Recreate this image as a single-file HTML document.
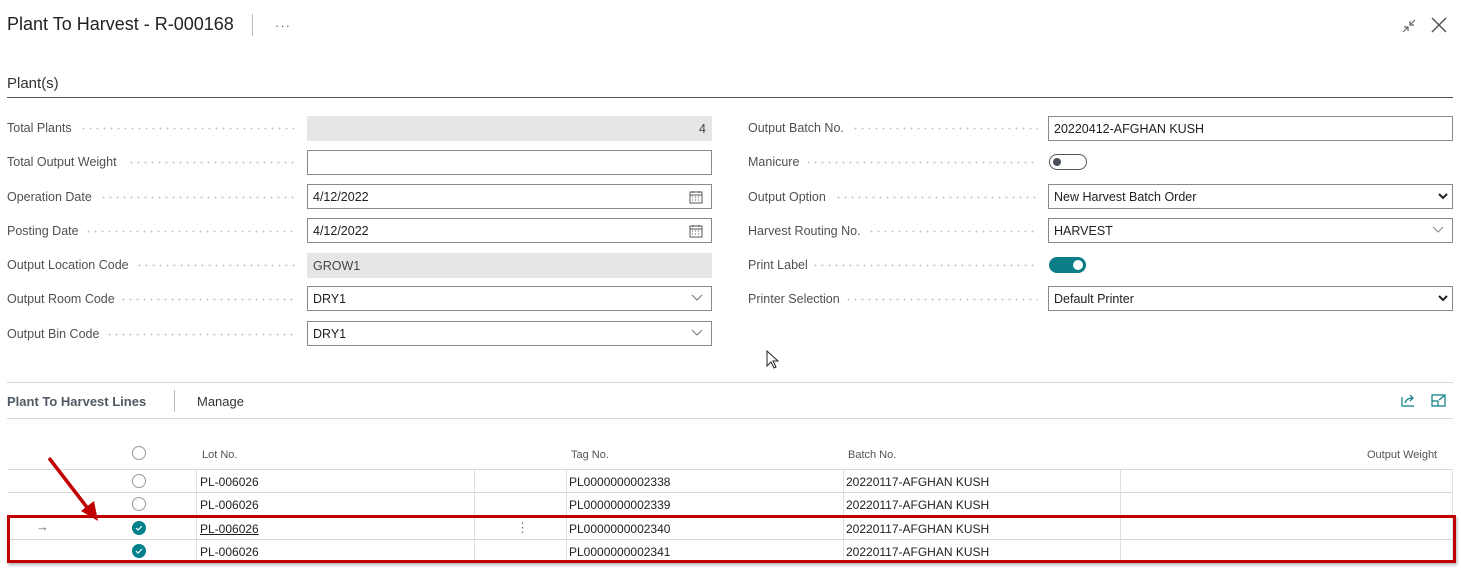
<!DOCTYPE html>
<html><head><meta charset="utf-8"><style>
*{box-sizing:border-box;margin:0;padding:0}
body{width:1461px;height:573px;background:#fff;font-family:"Liberation Sans",sans-serif;color:#212121;position:relative;overflow:hidden;font-size:12.5px}
.a{position:absolute;white-space:nowrap}
.lbl{position:absolute;font-size:12.5px;color:#505050;display:flex;align-items:center;height:24px}
.dots{position:absolute;height:24px;background:radial-gradient(circle,#c4c4c4 0.8px,transparent 1.1px) 0 50%/7px 3px repeat-x}
.inp{position:absolute;height:25px;border:1px solid #8a8886;background:#fff;font-size:12.5px;padding:0 5px;display:flex;align-items:center}
.ro{background:#e6e6e8;border-color:#e6e6e8;color:#444}
.chev{position:absolute;right:8px;top:7px}
.hl{position:absolute;height:1px;background:#d8d8d8}
.vl{position:absolute;width:1px;background:#e0e0e0}
.cell{position:absolute;font-size:12px;color:#212121}
.circ{position:absolute;width:14px;height:14px;border:1px solid #999;border-radius:50%}
.chk{position:absolute;width:14px;height:14px;border-radius:50%;background:#00808a}
</style></head><body>
<div class="a" style="left:7px;top:14px;font-size:18px;color:#222">Plant To Harvest - R-000168</div>
<div class="a" style="left:252px;top:14px;width:1px;height:22px;background:#bbb"></div>
<div class="a" style="left:275px;top:18px;font-size:13px;color:#666;letter-spacing:1px">···</div>
<svg class="a" style="left:1400px;top:17px" width="18" height="18" viewBox="0 0 18 18" fill="none" stroke="#666" stroke-width="1.2"><path d="M3 15L8 10M4 10h4v4M15 3l-5 5M10 4v4h4"/></svg>
<svg class="a" style="left:1431px;top:17px" width="16" height="16" viewBox="0 0 16 16" stroke="#555" stroke-width="1.5"><path d="M1 1L15 15M15 1L1 15"/></svg>
<div class="a" style="left:7px;top:75px;font-size:15px;color:#333">Plant(s)</div>
<div class="a" style="left:7px;top:97px;width:1446px;height:1px;background:#4a5560"></div>

<div class="lbl" style="left:7px;top:116px">Total Plants</div><div class="dots" style="left:80px;width:218px;top:116px"></div>
<div class="inp ro" style="left:307px;top:116px;width:405px;justify-content:flex-end">4</div>
<div class="lbl" style="left:7px;top:150px">Total Output Weight</div><div class="dots" style="left:128px;width:170px;top:150px"></div>
<div class="inp" style="left:307px;top:150px;width:405px"></div>
<div class="lbl" style="left:7px;top:185px">Operation Date</div><div class="dots" style="left:100px;width:198px;top:185px"></div>
<div class="inp" style="left:307px;top:184px;width:405px">4/12/2022<svg class="chev" style="top:5px" width="14" height="14" viewBox="0 0 14 14" fill="none" stroke="#555"><rect x="1" y="2" width="12" height="11"/><path d="M1 5h12M4 1v2M10 1v2M3 7h1M6 7h1M9 7h1M3 10h1M6 10h1M9 10h1"/></svg></div>
<div class="lbl" style="left:7px;top:219px">Posting Date</div><div class="dots" style="left:85px;width:213px;top:219px"></div>
<div class="inp" style="left:307px;top:218px;width:405px">4/12/2022<svg class="chev" style="top:5px" width="14" height="14" viewBox="0 0 14 14" fill="none" stroke="#555"><rect x="1" y="2" width="12" height="11"/><path d="M1 5h12M4 1v2M10 1v2M3 7h1M6 7h1M9 7h1M3 10h1M6 10h1M9 10h1"/></svg></div>
<div class="lbl" style="left:7px;top:253px">Output Location Code</div><div class="dots" style="left:136px;width:162px;top:253px"></div>
<div class="inp ro" style="left:307px;top:253px;width:405px">GROW1</div>
<div class="lbl" style="left:7px;top:287px">Output Room Code</div><div class="dots" style="left:120px;width:178px;top:287px"></div>
<div class="inp" style="left:307px;top:286px;width:405px">DRY1<svg class="chev" width="12" height="8" viewBox="0 0 12 8" fill="none" stroke="#777"><path d="M1 1l5 5 5-5"/></svg></div>
<div class="lbl" style="left:7px;top:322px">Output Bin Code</div><div class="dots" style="left:106px;width:192px;top:322px"></div>
<div class="inp" style="left:307px;top:321px;width:405px">DRY1<svg class="chev" width="12" height="8" viewBox="0 0 12 8" fill="none" stroke="#777"><path d="M1 1l5 5 5-5"/></svg></div>

<div class="lbl" style="left:748px;top:116px">Output Batch No.</div><div class="dots" style="left:852px;width:186px;top:116px"></div>
<div class="inp" style="left:1048px;top:116px;width:405px">20220412-AFGHAN KUSH</div>
<div class="lbl" style="left:748px;top:150px">Manicure</div><div class="dots" style="left:805px;width:233px;top:150px"></div>
<div class="a" style="left:1049px;top:154px;width:38px;height:16px;border:1px solid #555;border-radius:8px"><div style="position:absolute;left:3px;top:3px;width:8px;height:8px;border-radius:50%;background:#4a4f5a"></div></div>
<div class="lbl" style="left:748px;top:185px">Output Option</div><div class="dots" style="left:835px;width:203px;top:185px"></div>
<div class="inp" style="left:1048px;top:184px;width:405px">New Harvest Batch Order<svg class="chev" style="right:4px;top:8px" width="10" height="7" viewBox="0 0 10 7" fill="none" stroke="#222" stroke-width="2"><path d="M1 1l4 4 4-4"/></svg></div>
<div class="lbl" style="left:748px;top:219px">Harvest Routing No.</div><div class="dots" style="left:868px;width:170px;top:219px"></div>
<div class="inp" style="left:1048px;top:218px;width:405px">HARVEST<svg class="chev" width="12" height="8" viewBox="0 0 12 8" fill="none" stroke="#888"><path d="M1 1l5 5 5-5"/></svg></div>
<div class="lbl" style="left:748px;top:253px">Print Label</div><div class="dots" style="left:812px;width:226px;top:253px"></div>
<div class="a" style="left:1049px;top:257px;width:37px;height:16px;border-radius:8px;background:#0a7d86"><div style="position:absolute;right:3px;top:3px;width:10px;height:10px;border-radius:50%;background:#fff"></div></div>
<div class="lbl" style="left:748px;top:287px">Printer Selection</div><div class="dots" style="left:845px;width:193px;top:287px"></div>
<div class="inp" style="left:1048px;top:286px;width:405px">Default Printer<svg class="chev" style="right:4px;top:8px" width="10" height="7" viewBox="0 0 10 7" fill="none" stroke="#222" stroke-width="2"><path d="M1 1l4 4 4-4"/></svg></div>
<svg class="a" style="left:766px;top:350px" width="14" height="20" viewBox="0 0 14 20"><path d="M1 1v15l4-4 3 6 2-1-3-6h5z" fill="#fff" stroke="#222"/></svg>

<div class="hl" style="left:7px;top:382px;width:1446px"></div>
<div class="a" style="left:7px;top:394px;font-size:13px;font-weight:bold;color:#505a64">Plant To Harvest Lines</div>
<div class="a" style="left:174px;top:390px;width:1px;height:22px;background:#bbb"></div>
<div class="a" style="left:197px;top:394px;font-size:13px;color:#333">Manage</div>
<svg class="a" style="left:1401px;top:393px" width="16" height="14" viewBox="0 0 16 14" fill="none" stroke="#0a7d86" stroke-width="1.2"><path d="M1 4v9h12M4 10c1-4 4-5 8-5M9 2l3 3-3 3"/></svg>
<svg class="a" style="left:1431px;top:393px" width="15" height="14" viewBox="0 0 15 14" fill="none" stroke="#0a7d86" stroke-width="1.2"><path d="M1 2h13v11H1zM1 8h6v5M8 7l5-4"/></svg>
<div class="hl" style="left:7px;top:418px;width:1446px"></div>

<div class="circ" style="left:132px;top:446px"></div>
<div class="cell" style="left:202px;top:449px;font-size:11px;color:#555">Lot No.</div>
<div class="cell" style="left:571px;top:449px;font-size:11px;color:#555">Tag No.</div>
<div class="cell" style="left:848px;top:449px;font-size:11px;color:#555">Batch No.</div>
<div class="cell" style="left:1367px;top:449px;font-size:11px;color:#555">Output Weight</div>

<div class="hl" style="left:8px;top:469px;width:1445px"></div>
<div class="hl" style="left:8px;top:492px;width:1445px"></div>
<div class="hl" style="left:8px;top:516px;width:1445px"></div>
<div class="hl" style="left:8px;top:539px;width:1445px"></div>
<div class="vl" style="left:196px;top:469px;height:94px"></div>
<div class="vl" style="left:474px;top:469px;height:94px"></div>
<div class="vl" style="left:566px;top:469px;height:94px"></div>
<div class="vl" style="left:843px;top:469px;height:94px"></div>
<div class="vl" style="left:1120px;top:469px;height:94px"></div>
<div class="vl" style="left:1452px;top:469px;height:94px"></div>

<div class="circ" style="left:132px;top:474px"></div>
<div class="cell" style="left:200px;top:475px">PL-006026</div><div class="cell" style="left:569px;top:475px">PL0000000002338</div><div class="cell" style="left:846px;top:475px">20220117-AFGHAN KUSH</div>
<div class="circ" style="left:132px;top:497px"></div>
<div class="cell" style="left:200px;top:498px">PL-006026</div><div class="cell" style="left:569px;top:498px">PL0000000002339</div><div class="cell" style="left:846px;top:498px">20220117-AFGHAN KUSH</div>
<div class="cell" style="left:36px;top:519px;color:#666;font-size:13px">→</div>
<div class="chk" style="left:132px;top:521px"><svg width="14" height="14" viewBox="0 0 14 14" fill="none" stroke="#fff" stroke-width="1.2"><path d="M4 7l2 2 4-4"/></svg></div>
<div class="cell" style="left:200px;top:522px;text-decoration:underline">PL-006026</div><div class="cell" style="left:516px;top:520px;color:#777;font-size:13px">⋮</div><div class="cell" style="left:569px;top:522px">PL0000000002340</div><div class="cell" style="left:846px;top:522px">20220117-AFGHAN KUSH</div>
<div class="chk" style="left:132px;top:544px"><svg width="14" height="14" viewBox="0 0 14 14" fill="none" stroke="#fff" stroke-width="1.2"><path d="M4 7l2 2 4-4"/></svg></div>
<div class="cell" style="left:200px;top:545px">PL-006026</div><div class="cell" style="left:569px;top:545px">PL0000000002341</div><div class="cell" style="left:846px;top:545px">20220117-AFGHAN KUSH</div>

<div class="a" style="left:7px;top:515px;width:1449px;height:48px;border:3px solid #c00000;box-shadow:1px 2px 3px rgba(0,0,0,.3)"></div>
<svg class="a" style="left:45px;top:455px" width="60" height="70" viewBox="0 0 60 70"><path d="M4 3L44 55" stroke="#c00000" stroke-width="3.5"/><path d="M53 66L36 56L49 46z" fill="#c00000"/></svg>
</body></html>
